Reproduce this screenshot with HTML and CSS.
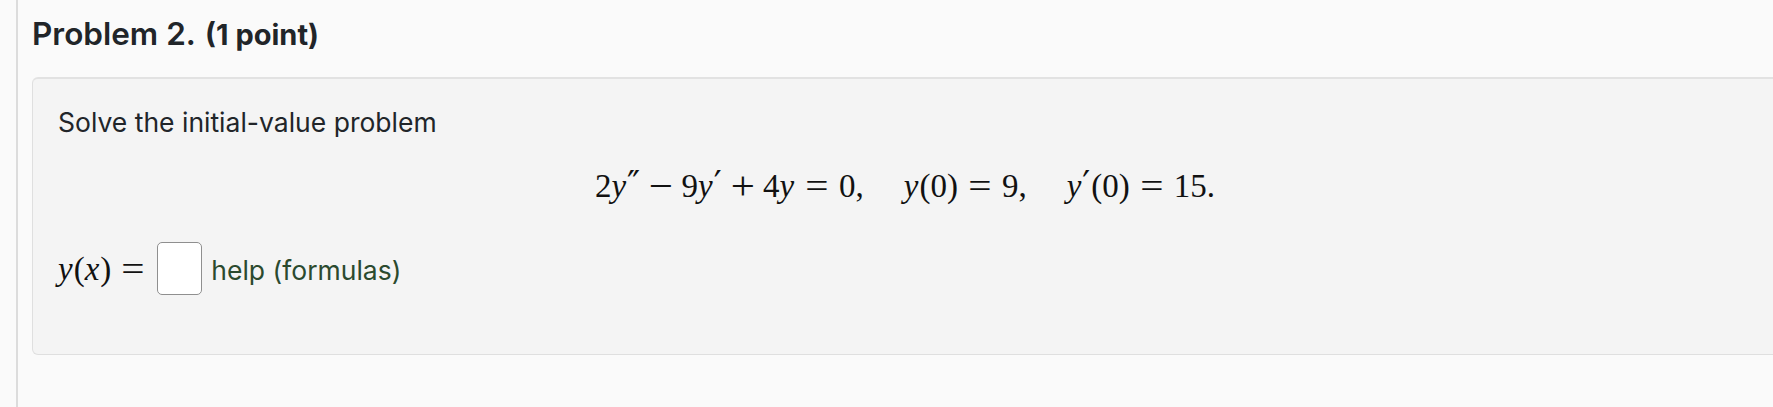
FILE: index.html
```html
<!DOCTYPE html>
<html>
<head>
<meta charset="utf-8">
<link rel="stylesheet" href="styles.css">
</head>
<body>
<div class="problem">
  <h2 class="title">Problem 2. <span class="points">(1 point)</span></h2>
  <div class="card">
    <p class="lead">Solve the initial-value problem</p>
    <div class="equation">
      <span class="m">2<i>y</i><sup>″</sup><span class="bin">−</span>9<i>y</i><sup>′</sup><span class="bin">+</span>4<i>y</i><span class="rel">=</span>0,</span>
      <span class="m"><i>y</i>(0)<span class="rel">=</span>9,</span>
      <span class="m"><i>y</i><sup>′</sup>(0)<span class="rel">=</span>15.</span>
    </div>
    <div class="answer">
      <span class="m lhs"><i>y</i>(<i>x</i>)<span class="rel">=</span></span>
      <span class="box"></span>
      <a class="help">help (formulas)</a>
    </div>
  </div>
</div>
</body>
</html>
```
FILE: styles.css
```css
html, body {
  margin: 0;
  padding: 0;
  background: #fafafa;
  overflow: hidden;
}
body {
  font-family: Inter, "Noto Sans", sans-serif;
  color: #212529;
}
.problem {
  margin-left: 16px;
  border-left: 2px solid #dcdcdc;
  padding: 15px 0 60px 14px;
  min-height: 400px;
  box-sizing: border-box;
}
.title {
  margin: 0 0 24px 0;
  font-size: 31.5px;
  line-height: 37px;
  font-weight: 600;
}
.points {
  font-size: 29px;
  font-weight: 700;
  margin-left: 2px;
}
.card {
  width: 1746px;
  box-sizing: border-box;
  background: #f4f4f4;
  border: 1px solid #dfdfdf;
  border-top: 2px solid #e2e2e2;
  border-radius: 6px;
  padding: 28px 25px 59px 25px;
}
.lead {
  margin: 0;
  font-size: 26.5px;
  line-height: 31px;
}
.m {
  font-family: "Liberation Serif", "DejaVu Serif", serif;
  font-size: 33px;
  color: #111;
  white-space: nowrap;
}
.m i {
  font-style: italic;
  margin-right: 1px;
}
.m sup {
  font-family: "DejaVu Sans", sans-serif;
  font-size: 35px;
  vertical-align: 1px;
  line-height: 0;
  margin-right: 1px;
}
.bin {
  display: inline-block;
  width: 0.778em;
  margin: 0 0.222em;
  text-align: center;
  transform: scale(1.3, 1.2);
}
.rel {
  display: inline-block;
  width: 0.778em;
  margin: 0 0.278em;
  text-align: center;
  transform: scale(1.25, 1.1);
}
.equation {
  margin-top: 28px;
  display: flex;
  justify-content: center;
  gap: 40px;
  line-height: 40px;
}
.answer {
  margin-top: 36px;
  display: flex;
  align-items: center;
  gap: 2px;
}
.lhs {
  line-height: 40px;
}
.box {
  width: 45px;
  height: 53px;
  box-sizing: border-box;
  background: #fff;
  border: 1.5px solid #8f8f8f;
  border-radius: 5px;
  margin-right: 7px;
}
.help {
  font-size: 26.5px;
  color: #2b4a2e;
  margin-top: 2px;
}
```
